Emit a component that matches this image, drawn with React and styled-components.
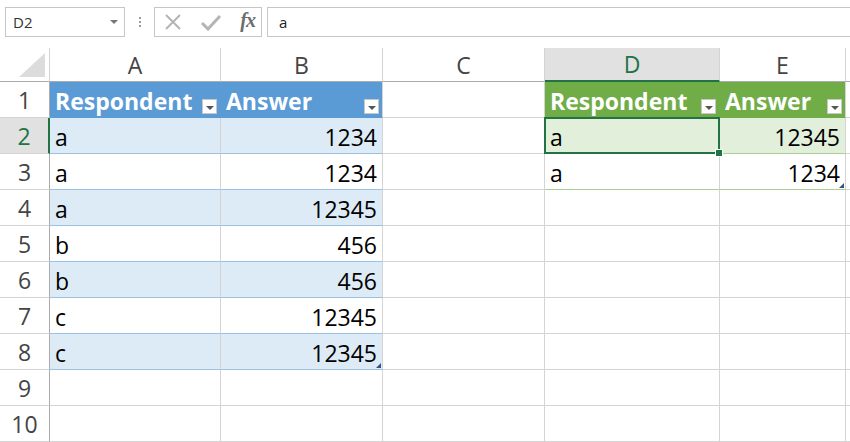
import React from 'react';
import styled, { createGlobalStyle, css } from 'styled-components';

const GlobalStyle = createGlobalStyle`
    html, body {
        margin: 0;
        padding: 0;
        background: #ffffff;
        overflow: hidden;
    }
    body {
        font-family: "Open Sans", "Liberation Sans", sans-serif;
    }
`;

const Page = styled.div`
    display: flex;
    flex-direction: column;
    width: 850px;
    height: 442px;
    overflow: hidden;
    background: #ffffff;
`;

const FormulaBar = styled.div`
    display: flex;
    flex-direction: row;
    align-items: flex-start;
    height: 48px;
    padding: 7px 0 0 5px;
    box-sizing: border-box;
`;

const NameBox = styled.div`
    display: flex;
    align-items: center;
    justify-content: space-between;
    width: 120px;
    height: 30px;
    box-sizing: border-box;
    border: 1px solid #c6c6c6;
    padding: 0 6px 0 7px;
    font-size: 15px;
    color: #333333;
`;

const Caret = styled.span`
    width: 0;
    height: 0;
    border-left: 4px solid transparent;
    border-right: 4px solid transparent;
    border-top: 4px solid #777777;
`;

const Dots = styled.div`
    display: flex;
    flex-direction: column;
    gap: 2px;
    margin: 10px 13px 0 14px;
    span {
        width: 2px;
        height: 2px;
        background: #9a9a9a;
    }
`;

const FxBox = styled.div`
    display: flex;
    align-items: center;
    width: 108px;
    height: 30px;
    box-sizing: border-box;
    border: 1px solid #c6c6c6;
    padding: 0 6px 0 9px;
    justify-content: space-between;
`;

const FxLabel = styled.span`
    font-family: "Liberation Serif", serif;
    font-style: italic;
    font-weight: bold;
    font-size: 20px;
    color: #6d6d6d;
    letter-spacing: -1px;
    margin-top: -3px;
`;

const FormulaInput = styled.div`
    display: flex;
    align-items: center;
    flex: 1;
    height: 30px;
    margin-left: 5px;
    box-sizing: border-box;
    border: 1px solid #c6c6c6;
    border-right: none;
    padding-left: 11px;
    font-size: 15px;
    color: #222222;
`;

const Grid = styled.div`
    display: grid;
    grid-template-columns: 50px 171px 162px 162px 175px 126px 20px;
    grid-template-rows: 34px repeat(10, 36px);
    font-size: 23px;
`;

const ColHeader = styled.div`
    display: flex;
    align-items: center;
    justify-content: center;
    box-sizing: border-box;
    border-right: 1px solid #d4d4d4;
    border-bottom: 1px solid #ababab;
    color: #444444;
    background: #ffffff;
    ${p => p.selected && css`
        background: #e1e1e1;
        color: #217346;
        border-bottom: 2px solid #217346;
    `}
`;

const Corner = styled.div`
    position: relative;
    box-sizing: border-box;
    border-right: 1px solid #d4d4d4;
    border-bottom: 1px solid #ababab;
    svg {
        position: absolute;
        right: 4px;
        bottom: 4px;
    }
`;

const RowHeader = styled.div`
    display: flex;
    align-items: center;
    justify-content: center;
    box-sizing: border-box;
    border-right: 1px solid #ababab;
    border-bottom: 1px solid #d4d4d4;
    color: #444444;
    ${p => p.selected && css`
        background: #e1e1e1;
        color: #217346;
        border-right: 2px solid #217346;
    `}
`;

const Cell = styled.div`
    position: relative;
    display: flex;
    align-items: center;
    justify-content: ${p => (p.right ? 'flex-end' : 'flex-start')};
    padding: 3px 5px 0 5px;
    box-sizing: border-box;
    border-right: 1px solid ${p => p.vline || '#d4d4d4'};
    border-bottom: 1px solid ${p => p.hline || '#d4d4d4'};
    background: ${p => p.bg || '#ffffff'};
    color: ${p => p.fg || '#000000'};
    font-weight: ${p => (p.bold ? 700 : 400)};
    white-space: nowrap;
    ${p => p.active && css`
        &::after {
            content: '';
            position: absolute;
            left: -1px;
            top: -1px;
            right: -1px;
            bottom: -1px;
            border: 2px solid #217346;
        }
        &::before {
            content: '';
            position: absolute;
            right: -4px;
            bottom: -4px;
            width: 6px;
            height: 6px;
            background: #217346;
            border: 1px solid #ffffff;
            z-index: 2;
        }
    `}
`;

const FilterButton = styled.span`
    position: absolute;
    right: 3px;
    bottom: 3px;
    width: 15px;
    height: 15px;
    box-sizing: border-box;
    background: #ffffff;
    border: 1px solid #c8c8c8;
    display: flex;
    align-items: center;
    justify-content: center;
    &::after {
        content: '';
        width: 0;
        height: 0;
        border-left: 4px solid transparent;
        border-right: 4px solid transparent;
        border-top: 4px solid #555555;
        margin-top: 2px;
    }
`;

const ResizeMark = styled.span`
    position: absolute;
    right: 1px;
    bottom: 1px;
    width: 0;
    height: 0;
    border-left: 5px solid transparent;
    border-bottom: 5px solid #3a4f8a;
`;

const themes = {
    blue: { head: '#5b9bd5', band: '#ddebf7', hline: '#9bc2e6' },
    green: { head: '#70ad47', band: '#e2efda', hline: '#a9d08e' },
};

const leftTable = [
    ['a', '1234'],
    ['a', '1234'],
    ['a', '12345'],
    ['b', '456'],
    ['b', '456'],
    ['c', '12345'],
    ['c', '12345'],
];

const rightTable = [
    ['a', '12345'],
    ['a', '1234'],
];

const columns = ['A', 'B', 'C', 'D', 'E', ''];

const Empty = ({ last }) => <Cell vline={last ? '#ffffff' : undefined} />;

const tableCells = (data, row, theme) => {
    const t = themes[theme];
    const r = row - 1;
    if (r === 0) {
        return [
            <Cell key="h1" bold bg={t.head} fg="#ffffff" hline={t.head} vline={t.head}>
                Respondent<FilterButton />
            </Cell>,
            <Cell key="h2" bold bg={t.head} fg="#ffffff" hline={t.head}>
                Answer<FilterButton />
            </Cell>,
        ];
    }
    const item = data[r - 1];
    if (!item) return null;
    const bg = r % 2 === 1 ? t.band : '#ffffff';
    const isLast = r === data.length;
    return [
        <Cell key="c1" bg={bg} hline={t.hline} active={theme === 'green' && r === 1}>
            {item[0]}
        </Cell>,
        <Cell key="c2" right bg={bg} hline={t.hline}>
            {item[1]}
            {isLast && <ResizeMark />}
        </Cell>,
    ];
};

const App = () => {
    const rows = Array.from({ length: 10 }, (_, i) => i + 1);

    return (
        <Page>
            <GlobalStyle />
            <FormulaBar>
                <NameBox>
                    D2
                    <Caret />
                </NameBox>
                <Dots>
                    <span />
                    <span />
                    <span />
                </Dots>
                <FxBox>
                    <svg width="18" height="18" viewBox="0 0 18 18">
                        <path d="M2 2 L16 16 M16 2 L2 16" stroke="#b5b5b5" strokeWidth="2" fill="none" />
                    </svg>
                    <svg width="22" height="18" viewBox="0 0 22 18">
                        <path d="M2 10 L8 16 L20 3" stroke="#b5b5b5" strokeWidth="3" fill="none" />
                    </svg>
                    <FxLabel>fx</FxLabel>
                </FxBox>
                <FormulaInput>a</FormulaInput>
            </FormulaBar>

            <Grid>
                <Corner>
                    <svg width="26" height="24" viewBox="0 0 26 24">
                        <polygon points="26,0 26,24 0,24" fill="#dcdcdc" />
                    </svg>
                </Corner>
                {columns.map((c, i) => (
                    <ColHeader key={i} selected={c === 'D'}>{c}</ColHeader>
                ))}

                {rows.map(row => {
                    const left = tableCells(leftTable, row, 'blue');
                    const right = tableCells(rightTable, row, 'green');
                    return (
                        <React.Fragment key={row}>
                            <RowHeader selected={row === 2}>{row}</RowHeader>
                            {left || [<Empty key="a" />, <Empty key="b" />]}
                            <Empty />
                            {right || [<Empty key="d" />, <Empty key="e" />]}
                            <Empty last />
                        </React.Fragment>
                    );
                })}
            </Grid>
        </Page>
    );
};

export default App;
